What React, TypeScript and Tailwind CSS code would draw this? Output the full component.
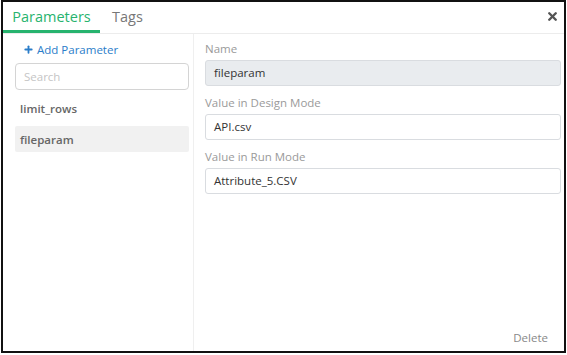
import { Plus, X } from "lucide-react";

const font = { fontFamily: '"Open Sans", "Noto Sans", sans-serif' };

const Field = ({ label, value, disabled }: { label: string; value: string; disabled?: boolean }) => (
  <div>
    <div className="text-[11.5px] leading-[16px] text-[#9a9a9a]">{label}</div>
    <div
      className={`mt-[3px] h-[26px] rounded-[3px] border border-[#d9dce0] px-[8px] text-[11.5px] leading-[24px] text-[#333] ${
        disabled ? "bg-[#e9ecef]" : "bg-white"
      }`}
    >
      {value}
    </div>
  </div>
);

export default function App() {
  return (
    <div className="bg-white" style={font}>
      <div className="ml-[1px] flex h-[353px] w-[565px] flex-col border-2 border-[#111]">
        {/* Tabs */}
        <div className="flex h-[32px] items-stretch border-b border-[#ececec]">
          <div className="flex w-[97px] items-center justify-center border-b-[3px] border-[#27b36e] pt-[1px] text-[14.5px] text-[#27b36e]">
            Parameters
          </div>
          <div className="flex items-center pb-[2px] pl-[12px] text-[14.5px] text-[#777]">Tags</div>
          <div className="ml-auto flex items-center pb-[2px] pr-[5px]">
            <X className="h-[13px] w-[13px] text-[#555]" strokeWidth={4.5} />
          </div>
        </div>

        <div className="flex flex-1">
          {/* Left panel */}
          <div className="w-[191px] border-r border-[#efefef] pl-[12px] pr-[4px] pt-[7px]">
            <div className="flex items-center pl-[8px] text-[11.5px] text-[#2a7dc9]">
              <Plus className="mr-[3px] h-[11px] w-[11px]" strokeWidth={4} />
              Add Parameter
            </div>
            <div className="mt-[5px] h-[27px] rounded-[4px] border border-[#d4d4d4] px-[8px] text-[11.5px] leading-[25px] text-[#c5c5c5]">
              Search
            </div>
            <div className="mt-[5px] flex h-[26px] items-center px-[5px] text-[11.5px] font-semibold text-[#666]">
              limit_rows
            </div>
            <div className="mt-[5px] flex h-[26px] items-center rounded-[2px] bg-[#f1f1f1] px-[5px] text-[11.5px] font-semibold text-[#666]">
              fileparam
            </div>
          </div>

          {/* Right panel */}
          <div className="flex flex-1 flex-col pl-[11px] pr-[3px] pt-[7px]">
            <div className="flex flex-col gap-[9px]">
              <Field label="Name" value="fileparam" disabled />
              <Field label="Value in Design Mode" value="API.csv" />
              <Field label="Value in Run Mode" value="Attribute_5.CSV" />
            </div>
            <div className="mt-auto mb-[5px] self-end pr-[13px] text-[11.5px] text-[#888]">Delete</div>
          </div>
        </div>
      </div>
    </div>
  );
}
